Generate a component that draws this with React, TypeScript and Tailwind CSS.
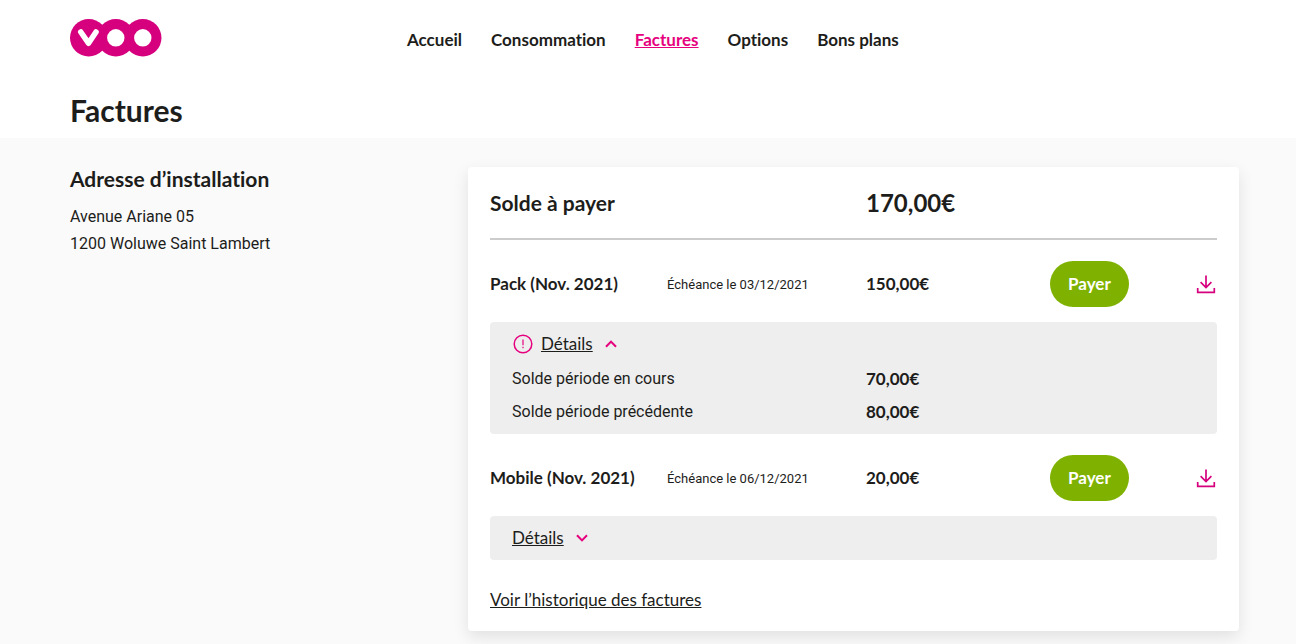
import { useState } from "react";
import clsx from "clsx";

type Detail = {
  label: string;
  amount: string;
};

type Invoice = {
  id: string;
  title: string;
  due: string;
  amount: string;
  warning: boolean;
  open: boolean;
  details: Detail[];
};

const links = ["Accueil", "Consommation", "Factures", "Options", "Bons plans"];

const invoices: Invoice[] = [
  {
    id: "pack",
    title: "Pack (Nov. 2021)",
    due: "Échéance le 03/12/2021",
    amount: "150,00€",
    warning: true,
    open: true,
    details: [
      { label: "Solde période en cours", amount: "70,00€" },
      { label: "Solde période précédente", amount: "80,00€" },
    ],
  },
  {
    id: "mobile",
    title: "Mobile (Nov. 2021)",
    due: "Échéance le 06/12/2021",
    amount: "20,00€",
    warning: false,
    open: false,
    details: [{ label: "Solde période en cours", amount: "20,00€" }],
  },
];

function Logo() {
  return (
    <svg width="92" height="38" viewBox="0 0 92 38" aria-hidden="true">
      <g fill="#d6007e">
        <circle cx="18.7" cy="18.8" r="18.7" />
        <circle cx="45.8" cy="18.8" r="18.7" />
        <circle cx="72.8" cy="18.8" r="18.7" />
      </g>
      <circle cx="45.8" cy="18.8" r="8.7" fill="#fff" />
      <circle cx="72.8" cy="18.8" r="8.7" fill="#fff" />
      <path
        d="M10.8 13l7.7 11.2L26 13"
        fill="none"
        stroke="#fff"
        strokeWidth="5.6"
        strokeLinecap="round"
        strokeLinejoin="round"
      />
    </svg>
  );
}

function DownloadIcon() {
  return (
    <svg width="20" height="20" viewBox="0 0 20 20" fill="none" stroke="#d6007e" aria-hidden="true">
      <path d="M10 1.5v12M4.6 8.2l5.4 5.3 5.4-5.3" strokeWidth="1.7" />
      <path d="M1.7 14v4.3h16.6V14" strokeWidth="1.7" />
    </svg>
  );
}

function WarningIcon() {
  return (
    <svg className="mr-2" width="21" height="20" viewBox="0 0 21 20" fill="none" stroke="#e6007e" aria-hidden="true">
      <circle cx="11" cy="10" r="8.8" strokeWidth="1.5" />
      <path d="M11 5.5v5.8M11 12.8v1.5" strokeWidth="1.2" />
    </svg>
  );
}

function Chevron({ up }: { up: boolean }) {
  return (
    <svg className="ml-3" width="12" height="8" viewBox="0 0 12 8" fill="none" stroke="#e6007e" strokeWidth="2" aria-hidden="true">
      <path d={up ? "M1 6.8L6 1.6l5 5.2" : "M1 1.2L6 6.4l5-5.2"} />
    </svg>
  );
}

function InvoiceItem({ invoice }: { invoice: Invoice }) {
  const [open, setOpen] = useState(invoice.open);

  return (
    <li>
      <div className="grid grid-cols-[177fr_199fr_184fr_167fr] items-center">
        <h3 className="font-bold whitespace-nowrap">{invoice.title}</h3>
        <p className="pt-px font-[Roboto] text-[13px] whitespace-nowrap">{invoice.due}</p>
        <p className="font-bold">{invoice.amount}</p>
        <div className="flex items-center justify-between">
          <button type="button" className="h-[46px] rounded-full bg-[#7fb200] px-[18px] font-bold text-white">
            Payer
          </button>
          <button type="button" aria-label="Télécharger" className="mr-px">
            <DownloadIcon />
          </button>
        </div>
      </div>

      <div className="mt-[15px] rounded bg-[#eeeeee] py-1.5">
        <button
          type="button"
          aria-expanded={open}
          onClick={() => setOpen(!open)}
          className="ml-[22px] flex h-8 items-center"
        >
          {invoice.warning && <WarningIcon />}
          <span className="underline">Détails</span>
          <Chevron up={open} />
        </button>
        {open && (
          <dl className="pt-0.5">
            {invoice.details.map((detail) => (
              <div key={detail.label} className="grid h-[33px] grid-cols-[376fr_351fr] items-center">
                <dt className="pl-[22px] font-[Roboto] text-base">{detail.label}</dt>
                <dd className="font-bold">{detail.amount}</dd>
              </div>
            ))}
          </dl>
        )}
      </div>
    </li>
  );
}

export default function App() {
  return (
    <div className="flex min-h-screen flex-col bg-[#fafafa] font-[Lato,sans-serif] text-[17px] leading-6 text-[#1d1d1b] [font-variant-ligatures:none]">
      <header className="bg-white pr-[57px] pl-[70px]">
        <div className="flex h-20 items-center">
          <a href="#" aria-label="VOO" className="mb-1 w-[337px]">
            <Logo />
          </a>
          <nav className="flex gap-[29px]">
            {links.map((link) => (
              <a
                key={link}
                href="#"
                className={clsx("font-bold", link === "Factures" && "text-[#e6007e] underline")}
              >
                {link}
              </a>
            ))}
          </nav>
        </div>
        <h1 className="h-[58px] pt-2.5 text-[30px] leading-10 font-bold">Factures</h1>
      </header>

      <main className="flex items-start pt-[29px] pr-[57px] pb-[13px] pl-[70px]">
        <aside className="w-[398px] shrink-0">
          <h2 className="text-[21px] leading-6 font-bold">Adresse d’installation</h2>
          <address className="mt-3 font-[Roboto] text-base leading-[27px] not-italic">
            Avenue Ariane 05
            <br />
            1200 Woluwe Saint Lambert
          </address>
        </aside>

        <section className="flex-1 rounded bg-white px-[22px] pb-[19px] shadow-[0_6px_16px_rgba(0,0,0,0.1)]">
          <div className="grid h-[73px] grid-cols-[376fr_351fr] items-center border-b-2 border-[#cccccc]">
            <h2 className="text-[21px] font-bold">Solde à payer</h2>
            <p className="text-2xl font-bold">170,00€</p>
          </div>
          <ul className="flex flex-col gap-[21px] pt-[21px]">
            {invoices.map((invoice) => (
              <InvoiceItem key={invoice.id} invoice={invoice} />
            ))}
          </ul>
          <a href="#" className="mt-7 inline-block underline">
            Voir l’historique des factures
          </a>
        </section>
      </main>
    </div>
  );
}
